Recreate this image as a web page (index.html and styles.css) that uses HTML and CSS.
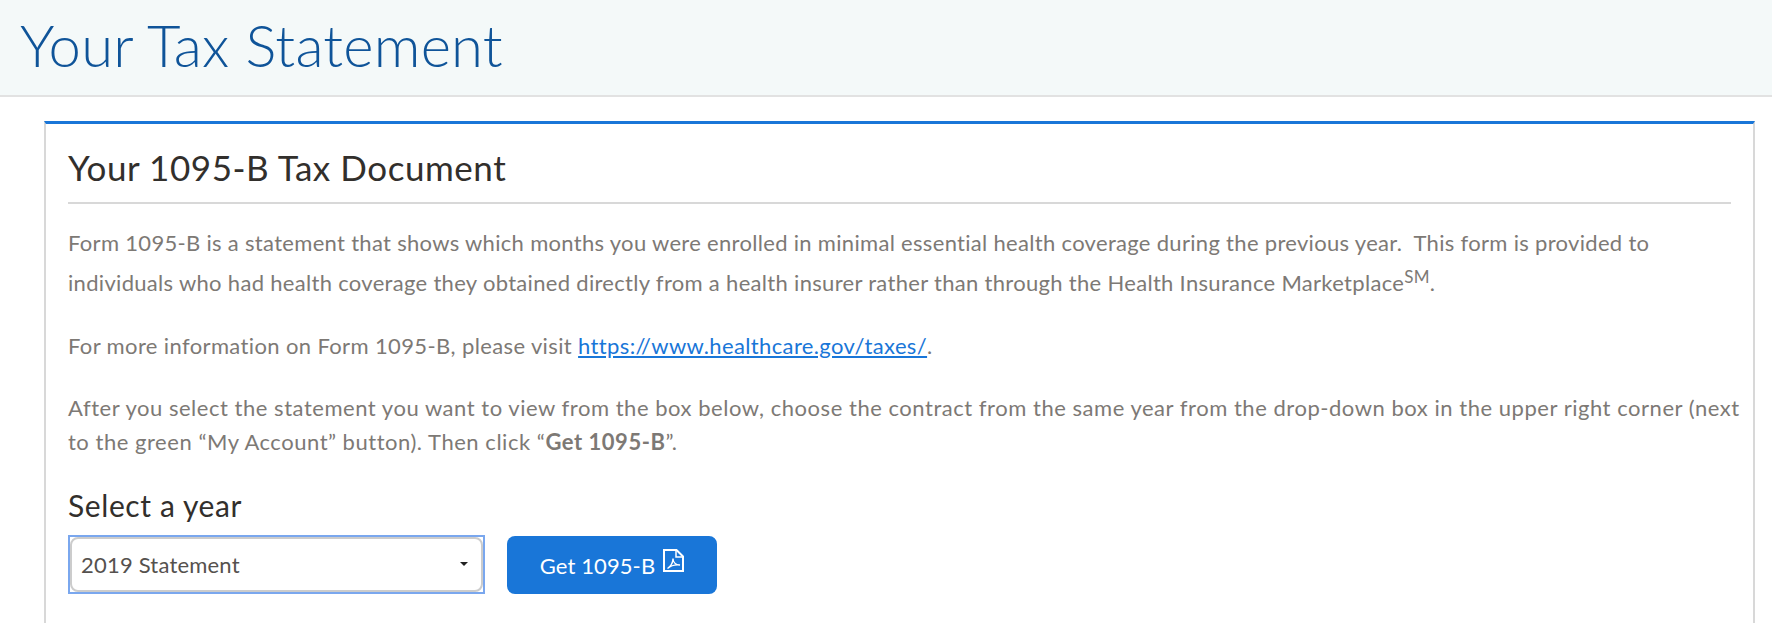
FILE: index.html
```html
<!DOCTYPE html>
<html lang="en">
<head>
    <meta charset="UTF-8">
    <title>Your Tax Statement</title>
    <link rel="stylesheet" href="styles.css">
</head>
<body>

    <header class="page-header">
        <h1>Your Tax Statement</h1>
    </header>

    <div class="card">
        <h2>Your 1095-B Tax Document</h2>
        <p>Form 1095-B is a statement that shows which months you were enrolled in minimal essential health coverage during the previous year.&nbsp; This form is provided to individuals who had health coverage they obtained directly from a health insurer rather than through the Health Insurance Marketplace<sup>SM</sup>.</p>
        <p class="more-info">For more information on Form 1095-B, please visit <a href="#">https://www.healthcare.gov/taxes/</a>.</p>
        <p class="instructions">After you select the statement you want to view from the box below, choose the contract from the same year from the drop-down box in the upper right corner (next to the green “My Account” button). Then click “<strong>Get 1095-B</strong>”.</p>

        <h3>Select a year</h3>
        <form class="year-form">
            <div class="select-wrap">
                <select class="year-select">
                    <option>2019 Statement</option>
                    <option>2018 Statement</option>
                </select>
            </div>
            <button type="button" class="get-button">
                Get 1095-B
                <svg class="pdf-icon" width="21" height="23" viewBox="0 0 21 23" fill="none" stroke="#fff" stroke-width="2">
                    <path d="M1 1H13.500L20 7.500V22H1Z"/>
                    <path d="M13 1V8H20" stroke-width="1.500"/>
                    <path d="M4.500 19.500C8 17 10 13 10 9.500C10 13.500 13 16 17 16C13 15.500 8 16.500 4.500 19.500Z" stroke-width="1.400"/>
                </svg>
            </button>
        </form>
    </div>

</body>
</html>
```

FILE: styles.css
```css
body {
    font-family: 'Lato', sans-serif;
    margin: 0;
    padding: 0;
    background-color: #fff;
    color: #333;
}

.page-header {
    height: 95px;
    background-color: #f4f9f9;
    border-bottom: 2px solid #e2e2e2;
    padding-left: 20px;
}

.page-header h1 {
    margin: 0;
    font-size: 58px;
    font-weight: 300;
    line-height: 90px;
    letter-spacing: 0.2px;
    color: #0f5499;
}

.card {
    margin: 24px 17px 0 44px;
    min-height: 502px;
    box-sizing: border-box;
    background: #fff;
    border: 2px solid #d8d8d8;
    border-top: 3px solid #1976d8;
    border-bottom: none;
    padding: 22px 22px 0;
}

h2 {
    margin: 0 0 22px;
    padding-bottom: 14px;
    font-size: 35px;
    font-weight: 400;
    line-height: 42px;
    letter-spacing: 0.55px;
    color: #322f2c;
    border-bottom: 2px solid #d8d8d8;
}

p {
    margin: 0 0 28.5px;
    font-size: 22px;
    line-height: 34px;
    letter-spacing: 0.31px;
    color: #7d7975;
}

p a {
    color: #1976d8;
}

.more-info {
    letter-spacing: 0.37px;
}

.instructions {
    margin-right: -18px;
    margin-bottom: 27.5px;
    letter-spacing: 0.53px;
}

sup {
    font-size: 17px;
}

h3 {
    margin: 0 0 12px;
    font-size: 30px;
    font-weight: 400;
    line-height: 36px;
    letter-spacing: 0.6px;
    color: #322f2c;
}

.year-form {
    display: flex;
    align-items: flex-end;
    gap: 22px;
}

.select-wrap {
    position: relative;
    width: 417px;
    height: 59px;
    box-sizing: border-box;
    border: 2px solid #7aa7ee;
}

/* dropdown arrow */
.select-wrap::after {
    content: "";
    position: absolute;
    right: 15px;
    top: 25px;
    border-left: 4px solid transparent;
    border-right: 4px solid transparent;
    border-top: 4px solid #222;
    pointer-events: none;
}

.year-select {
    display: block;
    width: 100%;
    height: 100%;
    padding: 0 9px;
    appearance: none;
    font-family: inherit;
    font-size: 22px;
    letter-spacing: 0.2px;
    color: #55514e;
    background-color: #fff;
    border: 2px solid #ccc;
    border-radius: 8px;
    outline: none;
}

.get-button {
    display: flex;
    align-items: center;
    gap: 8px;
    width: 210px;
    height: 58px;
    padding: 2px 0 0;
    justify-content: center;
    font-family: inherit;
    font-size: 22px;
    letter-spacing: 0.1px;
    color: #fff;
    background-color: #1976d8;
    border: none;
    border-radius: 8px;
}

.pdf-icon {
    margin-top: -10px;
}
```
